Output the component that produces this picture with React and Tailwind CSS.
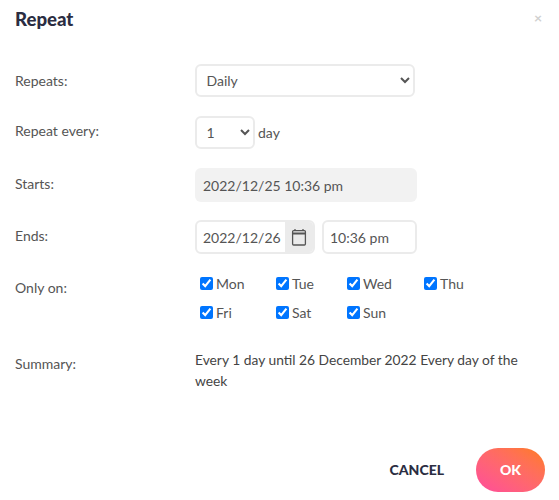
import React from "react";

const DAYS = [
  ["Mon", "Tue", "Wed", "Thu"],
  ["Fri", "Sat", "Sun"],
];

const DAY_WIDTH = { Mon: "w-[76px]", Fri: "w-[76px]", Tue: "w-[71px]", Sat: "w-[71px]", Wed: "w-[77px]", Sun: "w-[77px]", Thu: "w-[60px]" };

function Row({ label, className, labelClass = "", children }) {
  return (
    <div className={`flex ${className}`}>
      <div className={`w-[180px] shrink-0 text-[14px] text-[#555] ${labelClass}`}>{label}</div>
      <div className="min-w-0 flex-1">{children}</div>
    </div>
  );
}

function CalendarIcon() {
  return (
    <svg width="16" height="18" viewBox="0 0 16 18" fill="none" stroke="#555" strokeWidth="1.3">
      <rect x="1.6" y="2.6" width="12.8" height="14.4" rx="1" />
      <path d="M1.6 5.6h12.8" strokeWidth="2" />
      <path d="M4 1v2M12 1v2" />
    </svg>
  );
}

export default function App() {
  return (
    <div className="relative h-[500px] w-[559px] overflow-hidden bg-white font-['Lato',sans-serif] text-[#555]">
      <span className="absolute right-[17px] top-[11px] text-[14px] font-bold leading-none text-[#d0d0d0]">×</span>
      <h1 className="pl-[15px] pt-[7px] text-[18.6px] font-black leading-[24px] text-[#2b2d42]">Repeat</h1>

      <div className="pl-[15px] pr-[15px] pt-[33px]">
        <Row label="Repeats:" className="items-center">
          <select className="h-[33px] w-[220px] rounded-[6px] border-2 border-[#ebebeb] bg-white px-[5.5px] text-[14px] text-[#555]">
            <option>Daily</option>
          </select>
        </Row>

        <Row label="Repeat every:" labelClass="pb-[4px]" className="mt-[19px] items-center">
          <div className="flex items-center gap-[3px]">
            <select className="h-[33px] w-[60px] rounded-[6px] border-2 border-[#ebebeb] bg-white px-[5.5px] text-[14px] text-[#555]">
              <option>1</option>
            </select>
            <span className="text-[14px]">day</span>
          </div>
        </Row>

        <Row label="Starts:" labelClass="pb-[4px]" className="mt-[19px] items-center">
          <div className="flex h-[34px] w-[222px] items-center rounded-[6px] bg-[#f2f2f2] px-[8px] text-[14px]">
            2022/12/25 10:36 pm
          </div>
        </Row>

        <Row label="Ends:" labelClass="pb-[4px]" className="mt-[18px] items-center">
          <div className="flex gap-[7px]">
            <div className="flex h-[34px] w-[120px] overflow-hidden rounded-[6px] border-2 border-[#ebebeb]">
              <div className="flex flex-1 items-center pl-[6px] text-[14px]">2022/12/26</div>
              <div className="flex w-[28px] items-center justify-center bg-[#ebebeb]">
                <CalendarIcon />
              </div>
            </div>
            <div className="flex h-[34px] w-[95px] items-center rounded-[6px] border-2 border-[#ebebeb] pl-[6px] text-[14px]">
              10:36 pm
            </div>
          </div>
        </Row>

        <Row label="Only on:" labelClass="pt-[4px]" className="mt-[19px]">
          <div className="pl-[5px]">
            {DAYS.map((week, i) => (
              <div key={i} className={`flex ${i > 0 ? "mt-[8px]" : ""}`}>
                {week.map((d) => (
                  <label key={d} className={`flex h-[21px] items-center text-[14px] ${DAY_WIDTH[d]}`}>
                    <input type="checkbox" defaultChecked className="m-0 mr-[3px] h-[13px] w-[13px] accent-[#0075ff]" />
                    {d}
                  </label>
                ))}
              </div>
            ))}
          </div>
        </Row>

        <Row label="Summary:" labelClass="pt-[4px]" className="mt-[26px]">
          <p className="text-[13.8px] leading-[21px] text-[#444]">
            Every 1 day until 26 December 2022 Every day of the week
          </p>
        </Row>
      </div>

      <div className="absolute bottom-[8px] right-[14px] flex items-center">
        <button className="mr-[32px] pb-[2px] text-[14px] font-black text-[#2b2d42]">CANCEL</button>
        <button className="h-[44px] w-[69px] rounded-[22px] bg-gradient-to-tr from-[#ff4b9b] to-[#ff7c0a] pb-[2px] text-[14px] font-black text-white">
          OK
        </button>
      </div>
    </div>
  );
}
